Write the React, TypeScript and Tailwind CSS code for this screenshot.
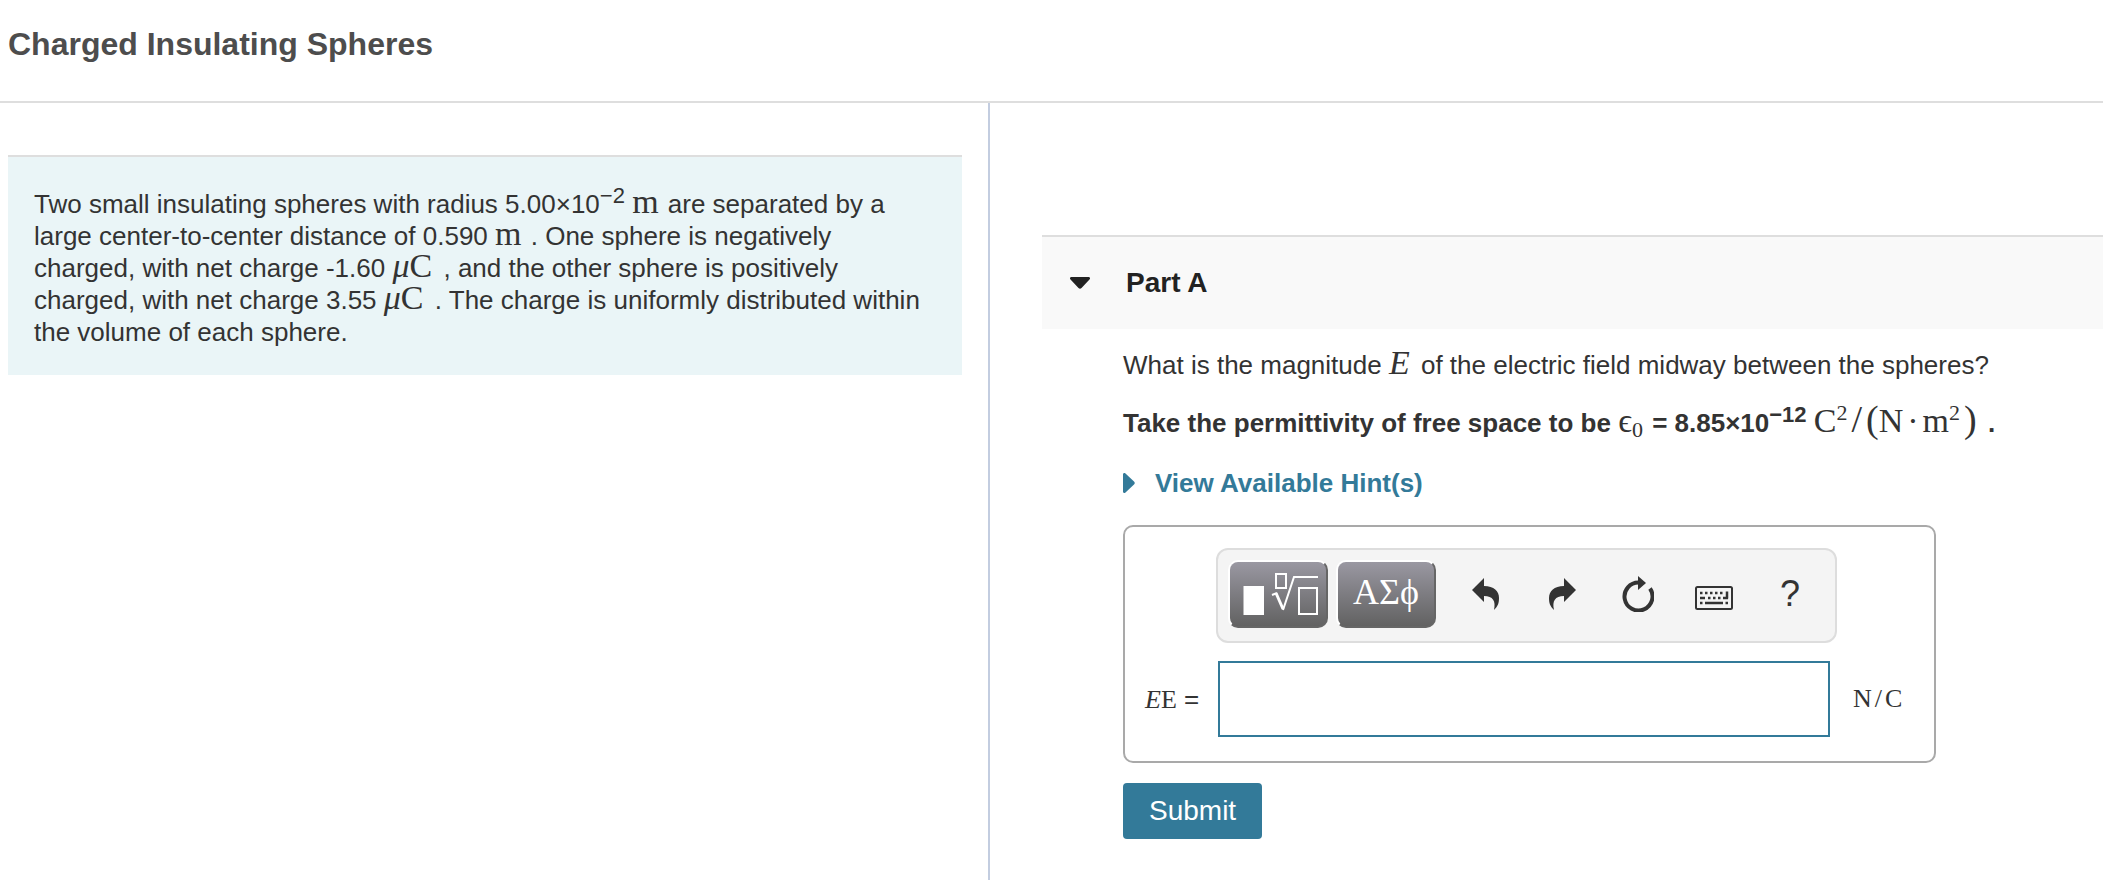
import React, { useState } from 'react';

const serif = "font-['Liberation_Serif','DejaVu_Serif',serif]";

// Inline math set in a roman face. The zero line height keeps the taller glyphs from stretching the line.
function Tex({ children, className = '' }: { children: React.ReactNode; className?: string }) {
  return <span className={`${serif} text-[34px] leading-[0px] font-normal ${className}`}>{children}</span>;
}

function Power({ children }: { children: React.ReactNode }) {
  return <sup className="text-[22px] leading-[0px] align-[10px] top-0">{children}</sup>;
}

function MicroCoulomb() {
  return (
    <Tex className="mr-1">
      <i>μ</i>C
    </Tex>
  );
}

function ToolIcon({ label, children }: { label: string; children: React.ReactNode }) {
  return (
    <button type="button" aria-label={label} title={label} className="shrink-0 w-[76px] h-[68px] flex items-center justify-center text-[#333]">
      {children}
    </button>
  );
}

const paletteButton =
  'w-[100px] h-[68px] rounded-[10px] border-2 border-t-white border-l-white border-r-[#666] border-b-[#666] bg-linear-to-b from-[#9a98a2] to-[#626262] text-white flex items-center justify-center';

function Toolbar() {
  return (
    <div role="toolbar" aria-label="Equation tools" className="h-[95px] flex items-start py-2.5 pl-2.5 rounded-xl border-2 border-[#ddd] bg-[#f4f4f4]">
      <div className="shrink-0 flex gap-2 mr-3">
        <button type="button" aria-label="Templates" className={paletteButton}>
          <svg width="96" height="64" viewBox="0 0 96 64" fill="none" stroke="#fff" strokeWidth="2">
            <rect x="13.500" y="24" width="20.500" height="29" fill="#fff" stroke="none" />
            <rect x="46" y="12" width="10" height="14" />
            <rect x="69" y="26" width="18" height="26" />
            <path d="M42 33l5-2" />
            <path d="M46 31l7 16" strokeWidth="3" />
            <path d="M53 48l11-33h24" />
          </svg>
        </button>
        <button type="button" aria-label="Symbols" className={`${paletteButton} ${serif} text-[36px] leading-none pb-1`}>
          ΑΣϕ
        </button>
      </div>
      <ToolIcon label="Undo">
        <svg width="28" height="32" viewBox="0 0 28 32" fill="currentColor">
          <path d="M0 12L12 0v8c10 0 15 5 15 12 0 5-1 8-5 12 2-9-1-14-10-14v6z" />
        </svg>
      </ToolIcon>
      <ToolIcon label="Redo">
        <svg width="28" height="32" viewBox="0 0 28 32" fill="currentColor">
          <path d="M28 12L16 0v8C6 8 1 13 1 20c0 5 1 8 5 12-2-9 1-14 10-14v6z" />
        </svg>
      </ToolIcon>
      <ToolIcon label="Reset">
        <svg width="32" height="36" viewBox="0 0 32 36" fill="none" stroke="currentColor" strokeWidth="4">
          <path d="M17 6.500a14 14 0 1 0 11 6" />
          <path d="M16 0l8 7-8 7z" fill="currentColor" stroke="none" />
        </svg>
      </ToolIcon>
      <ToolIcon label="Keyboard">
        <svg width="38" height="24" viewBox="0 0 38 24" fill="none" stroke="currentColor" className="mt-2">
          <rect x="1" y="1" width="36" height="22" rx="1.500" strokeWidth="2" />
          <path d="M5 7h2.500M10 7h2.500M15 7h2.500M20 7h2.500M25 7h2.500M5 12h5M13 12h2.500M18 12h2.500M23 12h2.500M28 12h5M5 17h2.500M10 17h18M30.500 17h2.500" strokeWidth="2.500" />
          <path d="M32 5.500v7" strokeWidth="2.500" />
        </svg>
      </ToolIcon>
      <ToolIcon label="Help">
        <span className="text-[36px] leading-none">?</span>
      </ToolIcon>
    </div>
  );
}

export default function App() {
  const [answer, setAnswer] = useState('');

  return (
    <div className="min-h-screen flex flex-col bg-white text-[#333] font-['Liberation_Sans',Arial,sans-serif] text-[26px] leading-8">
      <header className="px-2 pt-6 pb-[37px] border-b-2 border-[#dedede]">
        <h1 className="text-[32px] leading-10 font-bold text-[#4d4d4d]">Charged Insulating Spheres</h1>
      </header>

      <div className="flex-1 grid grid-cols-[990fr_1113fr]">
        <section className="border-r-2 border-[#c3cde0] pt-[52px] pl-2 pr-[26px]">
          <p className="border-t-2 border-[#dedede] bg-[#eaf5f7] pt-[31px] pb-[27px] px-[26px]">
            Two small insulating spheres with radius 5.00×10<Power>−2</Power> <Tex className="mr-0.5">m</Tex> are separated by a large
            center-to-center distance of 0.590 <Tex className="mr-0.5">m</Tex> . One sphere is negatively charged, with net charge
            -1.60 <MicroCoulomb /> , and the other sphere is positively charged, with net charge 3.55 <MicroCoulomb /> . The
            charge is uniformly distributed within the volume of each sphere.
          </p>
        </section>

        <main className="pt-[132px] pl-[52px] min-w-0">
          <div className="h-[94px] flex items-center gap-9 pl-7 border-t-2 border-[#dedede] bg-[#f9f9f9] text-[#222]">
            <button type="button" aria-label="Collapse Part A">
              <svg width="20" height="12" viewBox="0 0 20 12" fill="currentColor">
                <path d="M1 0h18q2 1 .500 2.500L11.500 11q-1.500 1.500-3 0L.500 2.500Q-1 1 1 0z" />
              </svg>
            </button>
            <h2 className="text-[28px] font-bold">Part A</h2>
          </div>

          <div className="pl-[81px] pt-5">
            <p>
              What is the magnitude <Tex className="italic mr-1">E</Tex> of the electric field midway between the spheres?
            </p>
            <p className="mt-[26px] font-bold">
              Take the permittivity of free space to be{' '}
              <Tex>
                ϵ<sub className="text-[22px] leading-[0px] align-[-5px] bottom-0">0</sub>
              </Tex>{' '}
              <span className="ml-0.5">=</span> 8.85×10<Power>−12</Power>{' '}
              <Tex>
                C<sup className="text-[22px] leading-[0px] align-[12px] top-0">2</sup>
                <span className="mx-1 text-[38px]">/</span>
                <span className="text-[38px]">(</span>N<span className="mx-1">·</span>m
                <sup className="text-[22px] leading-[0px] align-[12px] top-0">2</sup>
                <span className="ml-1 mr-1 text-[38px]">)</span>
              </Tex>{' '}
              .
            </p>
            <a href="#hints" className="mt-7 flex items-center gap-5 font-bold text-[#337a99]">
              <svg width="12" height="20" viewBox="0 0 12 20" fill="currentColor">
                <path d="M0 1q1-2 2.500-.500L11 8.500q1.500 1.500 0 3L2.500 19.500Q1 21 0 19z" />
              </svg>
              View Available Hint(s)
            </a>

            <form onSubmit={e => e.preventDefault()}>
              <div className="mt-[26px] w-full max-w-[813px] grid grid-cols-[91px_621px_1fr] gap-y-[18px] items-center pt-[21px] pb-6 border-2 border-[#a9a9a9] rounded-[10px]">
                <div className="col-start-2">
                  <Toolbar />
                </div>
                <label htmlFor="answer" className="col-start-1 pl-5 whitespace-nowrap">
                  <span className={serif}>
                    <i>E</i>E
                  </span>{' '}
                  =
                </label>
                <input
                  id="answer"
                  type="text"
                  value={answer}
                  onChange={e => setAnswer(e.target.value)}
                  className="ml-0.5 w-[612px] h-[76px] px-3 bg-white border-2 border-[#337a99] outline-none"
                />
                <span className={`${serif} pl-4 flex gap-[3px]`}>
                  <span>N</span>
                  <span>/</span>
                  <span>C</span>
                </span>
              </div>
              <button type="submit" className="mt-5 h-14 px-[26px] rounded bg-[#337a99] text-white text-[28px]">
                Submit
              </button>
            </form>
          </div>
        </main>
      </div>
    </div>
  );
}
